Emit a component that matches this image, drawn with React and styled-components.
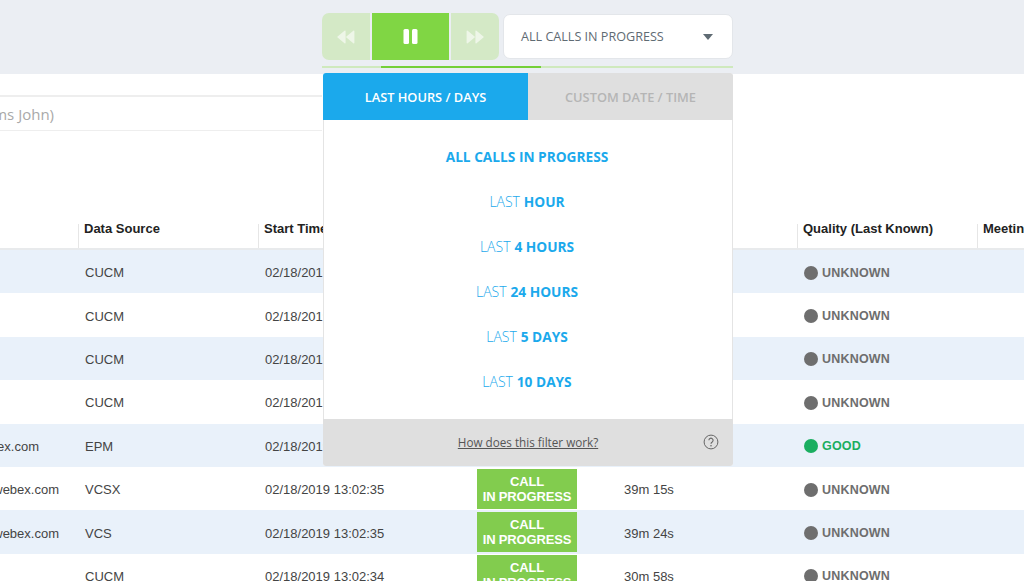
import React from "react";
import styled, { createGlobalStyle } from "styled-components";

const Global = createGlobalStyle`
  html, body { margin: 0; padding: 0; background: #fff; }
  * { box-sizing: border-box; }
`;

const ui = `"Open Sans", "Liberation Sans", sans-serif`;
const table = `"Liberation Sans", Arial, sans-serif`;

const Page = styled.div`
  position: relative;
  width: 1024px;
  height: 581px;
  overflow: hidden;
  background: #fff;
`;
const TopBar = styled.header`
  height: 74px;
  background: #ebeef3;
  padding: 13px 0 0 322px;
`;
const Controls = styled.div`
  display: flex;
  width: 411px;
  height: 47px;
`;
const Transport = styled.div`
  display: flex;
  gap: 2px;
  width: 177px;
`;
const TransportButton = styled.button`
  border: 0;
  padding: 0;
  display: flex;
  align-items: center;
  justify-content: center;
  width: ${(p) => (p.$active ? "77px" : "48px")};
  background: ${(p) => (p.$active ? "#80d644" : "#d4e9c6")};
  border-radius: ${(p) => p.$radius || "0"};
`;
const RangeSelect = styled.div`
  margin: 1px 0 1px 4px;
  flex: 1;
  display: flex;
  align-items: center;
  justify-content: space-between;
  padding: 0 19px 0 17px;
  background: #fff;
  border: 1px solid #e3e6ea;
  border-radius: 7px;
  font: 400 12.6px ${ui};
  color: #5f6b73;
`;
const Caret = styled.span`
  width: 0;
  height: 0;
  border-left: 5.5px solid transparent;
  border-right: 5.5px solid transparent;
  border-top: 6px solid #5f6b73;
`;
const Progress = styled.div`
  position: absolute;
  left: 322px;
  top: 66px;
  width: 411px;
  height: 2px;
  background: #cfe9bd;
`;
const ProgressFill = styled.div`
  margin-left: 59px;
  width: 160px;
  height: 2px;
  background: #75d038;
`;
const Search = styled.div`
  margin: 21px 0 0 -120px;
  width: 442px;
  height: 36px;
  border-top: 2px solid #eeeeee;
  border-bottom: 1px solid #eeeeee;
  display: flex;
  align-items: center;
  font: 400 15px ${ui};
  color: #a9a9a9;
`;
const Placeholder = styled.span`
  width: 174px;
  text-align: right;
  white-space: nowrap;
`;
const columns = "78px 180px 219px 100px 220px 180px 47px";
const HeaderRow = styled.div`
  margin-top: 93px;
  display: grid;
  grid-template-columns: ${columns};
  height: 26px;
  border-bottom: 2px solid #e8eaec;
  font: 700 13px/9px ${table};
  color: #222;
`;
const HeaderCell = styled.div`
  padding-left: ${(p) => (p.$divider ? "5px" : "0")};
  white-space: nowrap;
  ${(p) => p.$divider && "border-left: 1px solid #e6e6e6;"}
`;
const Rows = styled.div`
  display: flex;
  flex-direction: column;
`;
const Row = styled.div`
  display: grid;
  grid-template-columns: ${columns};
  align-items: center;
  height: 43.4px;
  padding-top: 2px;
  flex: none;
  background: ${(p) => (p.$alt ? "#e9f1fa" : "#fff")};
  font: 400 13px ${table};
  color: #444;
`;
const Host = styled.div`
  overflow: hidden;
  white-space: nowrap;
  display: flex;
  justify-content: flex-end;
  padding-right: ${(p) => p.$inset}px;
  min-width: 0;
`;
const Cell = styled.div`
  padding-left: 7px;
  white-space: nowrap;
`;
const Status = styled.div`
  height: 40px;
  margin-top: -2px;
  background: #82cc4e;
  color: #fff;
  font: 700 13px/15px ${table};
  letter-spacing: -0.15px;
  text-align: center;
  padding-top: 5px;
`;
const Duration = styled.div`
  padding-left: 47px;
`;
const Quality = styled.div`
  display: flex;
  align-items: center;
  gap: 4px;
  padding-left: 7px;
  font-size: 12.5px;
  font-weight: 700;
  letter-spacing: 0.2px;
  color: ${(p) => (p.$good ? "#1aae60" : "#6e6e6e")};
`;
const Dot = styled.span`
  width: 14px;
  height: 14px;
  border-radius: 50%;
  background: currentColor;
`;
const Panel = styled.section`
  position: absolute;
  left: 323px;
  top: 73px;
  width: 410px;
  height: 393px;
  display: flex;
  flex-direction: column;
  background: #fff;
  border-radius: 3px;
  overflow: hidden;
`;
const Tabs = styled.div`
  display: flex;
  height: 47px;
  flex: none;
`;
const Tab = styled.div`
  flex: 1;
  display: flex;
  align-items: center;
  justify-content: center;
  font: 600 12.8px ${ui};
  color: ${(p) => (p.$active ? "#fff" : "#b5b5b5")};
  background: ${(p) => (p.$active ? "#1ba9ec" : "#dfdfdf")};
`;
const Options = styled.ul`
  flex: 1;
  list-style: none;
  margin: 0;
  padding: 14px 2px 0 0;
  border: solid #e4e4e4;
  border-width: 0 1px;
`;
const Option = styled.li`
  height: 45px;
  display: flex;
  align-items: center;
  justify-content: center;
  gap: 0.28em;
  font: 300 14px ${ui};
  color: #1ba9ec;
  b { font-weight: 700; font-size: 13.7px; }
`;
const Footer = styled.footer`
  position: relative;
  height: 47px;
  padding-bottom: 2px;
  flex: none;
  background: #dfdfdf;
  display: flex;
  align-items: center;
  justify-content: center;
`;
const Help = styled.a`
  font: 400 11.7px ${ui};
  color: #555;
  text-decoration: underline;
`;
const HelpIcon = styled.svg`
  position: absolute;
  right: 14px;
  top: 15px;
`;

const rows = [
  { host: "", inset: 0, source: "CUCM", time: "02/18/2019 13:02:38", q: "UNKNOWN" },
  { host: "", inset: 0, source: "CUCM", time: "02/18/2019 13:02:38", q: "UNKNOWN" },
  { host: "", inset: 0, source: "CUCM", time: "02/18/2019 13:02:37", q: "UNKNOWN" },
  { host: "", inset: 0, source: "CUCM", time: "02/18/2019 13:02:37", q: "UNKNOWN" },
  { host: "mcu01.ex.com", inset: 39, source: "EPM", time: "02/18/2019 13:02:36", q: "GOOD" },
  { host: "mcu01.webex.com", inset: 19, source: "VCSX", time: "02/18/2019 13:02:35", call: true, dur: "39m 15s", q: "UNKNOWN" },
  { host: "mcu02.webex.com", inset: 19, source: "VCS", time: "02/18/2019 13:02:35", call: true, dur: "39m 24s", q: "UNKNOWN" },
  { host: "", inset: 0, source: "CUCM", time: "02/18/2019 13:02:34", call: true, dur: "30m 58s", q: "UNKNOWN" },
];

const options = [
  [null, "ALL CALLS IN PROGRESS"],
  ["LAST", "HOUR"],
  ["LAST", "4 HOURS"],
  ["LAST", "24 HOURS"],
  ["LAST", "5 DAYS"],
  ["LAST", "10 DAYS"],
];

const Rewind = ({ flip }) => (
  <svg width="18" height="14" viewBox="0 0 18 14" style={flip ? { transform: "scaleX(-1)" } : undefined}>
    <path d="M8.6 1.2v11.6a.7.7 0 0 1-1.1.5L.6 7.6a.8.8 0 0 1 0-1.2L7.5.7a.7.7 0 0 1 1.1.5z M17.4 1.2v11.6a.7.7 0 0 1-1.1.5L9.4 7.6a.8.8 0 0 1 0-1.2L16.3.7a.7.7 0 0 1 1.1.5z" fill="#eef6e8" />
  </svg>
);

export default function App() {
  return (
    <Page>
      <Global />
      <TopBar>
        <Controls>
          <Transport>
            <TransportButton $radius="7px 0 0 7px"><Rewind /></TransportButton>
            <TransportButton $active>
              <svg width="15" height="15" viewBox="0 0 15 15">
                <rect x="0.5" width="5.5" height="15" rx="1.5" fill="#fff" />
                <rect x="9" width="5.5" height="15" rx="1.5" fill="#fff" />
              </svg>
            </TransportButton>
            <TransportButton $radius="0 7px 7px 0"><Rewind flip /></TransportButton>
          </Transport>
          <RangeSelect>
            ALL CALLS IN PROGRESS
            <Caret />
          </RangeSelect>
        </Controls>
      </TopBar>
      <Progress><ProgressFill /></Progress>
      <Search><Placeholder>(e.g. Williams John)</Placeholder></Search>
      <HeaderRow>
        <HeaderCell />
        <HeaderCell $divider>Data Source</HeaderCell>
        <HeaderCell $divider>Start Time</HeaderCell>
        <HeaderCell />
        <HeaderCell />
        <HeaderCell $divider>Quality (Last Known)</HeaderCell>
        <HeaderCell $divider>Meeting</HeaderCell>
      </HeaderRow>
      <Rows>
        {rows.map((r, i) => (
          <Row key={i} $alt={i % 2 === 0}>
            <Host $inset={r.inset}>{r.host}</Host>
            <Cell>{r.source}</Cell>
            <Cell>{r.time}</Cell>
            {r.call ? <Status>CALL<br />IN PROGRESS</Status> : <div />}
            <Duration>{r.dur}</Duration>
            <Quality $good={r.q === "GOOD"}><Dot />{r.q}</Quality>
            <div />
          </Row>
        ))}
      </Rows>
      <Panel>
        <Tabs>
          <Tab $active>LAST HOURS / DAYS</Tab>
          <Tab>CUSTOM DATE / TIME</Tab>
        </Tabs>
        <Options>
          {options.map(([light, bold]) => (
            <Option key={bold}>{light && <span>{light}</span>}<b>{bold}</b></Option>
          ))}
        </Options>
        <Footer>
          <Help>How does this filter work?</Help>
          <HelpIcon width="16" height="16" viewBox="0 0 16 16">
            <circle cx="8" cy="8" r="6.9" fill="none" stroke="#666" strokeWidth="1" />
            <path d="M5.9 6.3a2.1 2.1 0 1 1 3.3 1.7c-.8.5-1.2.9-1.2 1.8" fill="none" stroke="#666" strokeWidth="1.1" />
            <circle cx="8" cy="11.8" r=".8" fill="#666" />
          </HelpIcon>
        </Footer>
      </Panel>
    </Page>
  );
}
